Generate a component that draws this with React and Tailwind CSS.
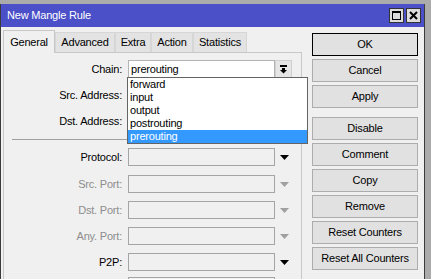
import React from 'react';

const tabs = [
  { name: 'General', w: 'w-[52px]', active: true },
  { name: 'Advanced', w: 'w-[60px]' },
  { name: 'Extra', w: 'w-[36px]' },
  { name: 'Action', w: 'w-[42px]' },
  { name: 'Statistics', w: 'w-[54px]' },
];

const chainOptions = ['forward', 'input', 'output', 'postrouting', 'prerouting'];

const Arrow = ({ disabled }) => (
  <svg width="9" height="5" viewBox="0 0 9 5" className="ml-[5px]">
    <polygon points="0,0 9,0 4.5,5" fill={disabled ? '#a0a0a0' : '#000'} />
  </svg>
);

const Field = ({ label, disabled, className = '' }) => (
  <div className={`flex items-center h-[18px] ${className}`}>
    <div className={`w-[118px] text-right ${disabled ? 'text-[#8d8d8d]' : 'text-black'}`}>{label}</div>
    <div className="ml-[6px] w-[147px] h-[18px] border border-[#a5a5a5]" />
    <Arrow disabled={disabled} />
  </div>
);

const Button = ({ children, primary, className = '' }) => (
  <div
    className={`h-[23px] flex items-center justify-center bg-[#e1e1e1] border ${
      primary ? 'border-black' : 'border-[#adadad]'
    } ${className}`}
  >
    {children}
  </div>
);

export default function App() {
  return (
    <div className="w-[431px] h-[279px] overflow-hidden bg-[#ababab] pt-[4px] font-['Liberation_Sans',Arial,sans-serif] text-[11px] tracking-[-0.2px] text-black leading-none">
      <div className="w-[425px] h-[275px] bg-[#f0f0f0] border-l border-r border-[#3c3c3c] flex flex-col">
        {/* Title bar */}
        <div className="h-[23px] shrink-0 bg-[#4b4fc8] flex items-center justify-between pl-[6px] pr-[3px]">
          <span className="text-white text-[11px]">New Mangle Rule</span>
          <div className="flex gap-[2px]">
            <div className="w-[15px] h-[15px] bg-[#dcdcdc] border border-[#333] flex items-center justify-center">
              <div className="w-[9px] h-[9px] border border-black border-t-2" />
            </div>
            <div className="w-[15px] h-[15px] bg-[#dcdcdc] border border-[#333] flex items-center justify-center">
              <svg width="9" height="9" viewBox="0 0 9 9">
                <path d="M1 1 L8 8 M8 1 L1 8" stroke="#000" strokeWidth="2" />
              </svg>
            </div>
          </div>
        </div>

        <div className="flex flex-1 min-h-0">
          {/* Left: tabs + form */}
          <div className="ml-[2px] w-[299px] flex flex-col">
            <div className="h-[25px] shrink-0 flex items-end">
              {tabs.map((t) =>
                t.active ? (
                  <div
                    key={t.name}
                    className={`${t.w} h-[23px] -mb-px relative z-10 bg-[#f0f0f0] border-l border-t border-r border-[#c8c8c8] flex items-center justify-center`}
                  >
                    {t.name}
                  </div>
                ) : (
                  <div
                    key={t.name}
                    className={`${t.w} h-[20px] bg-[#e3e3e3] border-l border-t border-r border-[#d6d6d6] flex items-center justify-center`}
                  >
                    {t.name}
                  </div>
                )
              )}
            </div>

            <div className="flex-1 border-t border-l border-r border-[#c8c8c8] pt-[7px] flex flex-col">
              {/* Chain with open list */}
              <div className="relative flex items-center h-[18px]">
                <div className="w-[118px] text-right">Chain:</div>
                <div className="ml-[6px] w-[147px] h-[18px] bg-white border border-[#b4b4b4] flex items-center pl-[2px]">
                  prerouting
                </div>
                <div className="w-[17px] h-[18px] bg-[#e6e6e6] border border-[#d0d0d0] flex items-center justify-center">
                  <svg width="7" height="9" viewBox="0 0 7 9">
                    <rect x="0" y="0" width="7" height="2" fill="#000" />
                    <rect x="2" y="3" width="3" height="2" fill="#000" />
                    <polygon points="0,5 7,5 3.5,8.5" fill="#000" />
                  </svg>
                </div>
                <div className="absolute left-[123px] top-[17px] w-[181px] h-[67px] z-20 bg-white border border-[#646464] flex flex-col">
                  {chainOptions.map((o) => (
                    <div
                      key={o}
                      className={`h-[13px] flex items-center pl-[2px] ${
                        o === 'prerouting' ? 'bg-[#3399ff] text-white' : 'text-black'
                      }`}
                    >
                      {o}
                    </div>
                  ))}
                </div>
              </div>
              <div className="flex items-center h-[18px] mt-[8px]">
                <div className="w-[118px] text-right">Src. Address:</div>
                <div className="ml-[6px] w-[147px] h-[18px] bg-white border border-[#b4b4b4]" />
              </div>
              <div className="flex items-center h-[18px] mt-[8px]">
                <div className="w-[118px] text-right">Dst. Address:</div>
                <div className="ml-[6px] w-[147px] h-[18px] bg-white border border-[#b4b4b4]" />
              </div>

              <div className="mt-[9px] ml-[8px] w-[283px] h-px bg-[#a0a0a0]" />

              <Field label="Protocol:" className="mt-[8px]" />
              <Field label="Src. Port:" disabled className="mt-[9px]" />
              <Field label="Dst. Port:" disabled className="mt-[8px]" />
              <Field label="Any. Port:" disabled className="mt-[8px]" />
              <Field label="P2P:" className="mt-[8px]" />
              <div className="mt-[6px] ml-[124px] w-[147px] h-[18px] border border-[#a5a5a5]" />
            </div>
          </div>

          {/* Right: buttons */}
          <div className="ml-[10px] w-[106px] pt-[6px] flex flex-col gap-[3px]">
            <Button primary>OK</Button>
            <Button>Cancel</Button>
            <Button>Apply</Button>
            <Button className="mt-[6px]">Disable</Button>
            <Button>Comment</Button>
            <Button>Copy</Button>
            <Button>Remove</Button>
            <Button>Reset Counters</Button>
            <Button>Reset All Counters</Button>
          </div>
        </div>
      </div>
    </div>
  );
}
